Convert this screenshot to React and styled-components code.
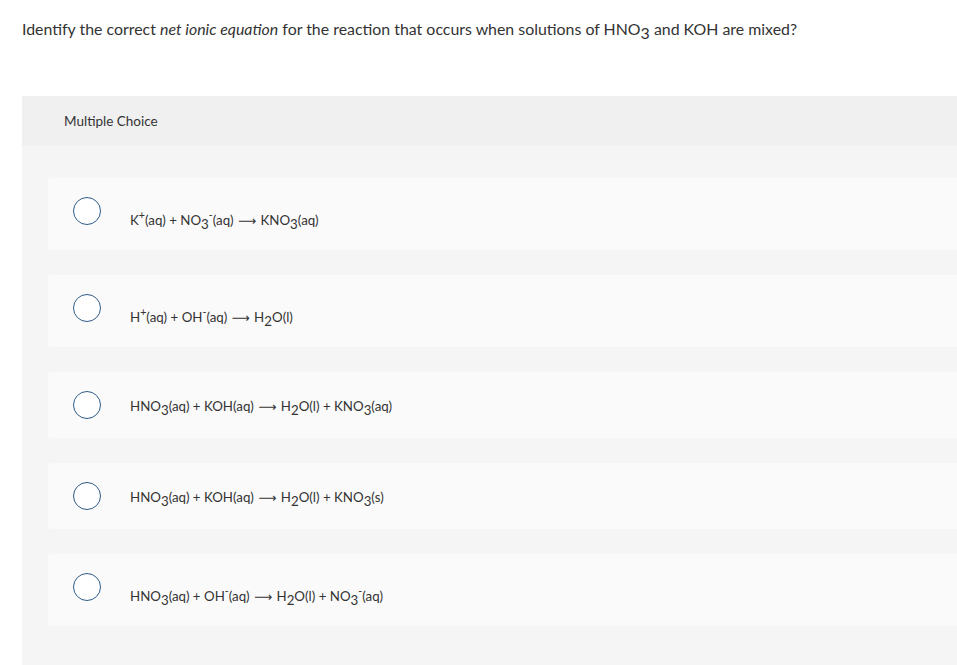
import React from "react";
import styled, { createGlobalStyle } from "styled-components";

const Global = createGlobalStyle`
  html, body { margin: 0; padding: 0; background: #ffffff; }
  body { overflow: hidden; font-family: "Lato", "Open Sans", sans-serif; color: #333333; }
  #root { width: 957px; height: 665px; overflow: hidden; }
`;

const Page = styled.div`
  padding: 17px 0 0 22px;
  height: 665px;
  box-sizing: border-box;
`;

const Prompt = styled.p`
  margin: 0;
  font-size: 15.9px;
  line-height: 24px;
  color: #333333;
  white-space: nowrap;
  em { font-style: italic; }
`;

const Panel = styled.section`
  margin-top: 55px;
  margin-right: -60px;
  background: #f5f5f5;
  height: 600px;
`;

const PanelHeader = styled.div`
  height: 50px;
  background: #f0f0f0;
  display: flex;
  align-items: center;
  padding-left: 42px;
  font-size: 13.5px;
  color: #333333;
`;

const Options = styled.div`
  display: flex;
  flex-direction: column;
  gap: 25px;
  padding: 32px 0 0 26px;
`;

const Card = styled.label`
  display: flex;
  align-items: flex-start;
  gap: 29px;
  background: #fafafa;
  border-radius: 4px 0 0 4px;
  padding: 19px 0 19px 25px;
`;

const Radio = styled.span`
  flex: none;
  width: 28px;
  height: 28px;
  box-sizing: border-box;
  border-radius: 50%;
  border: 1.5px solid #2f5b86;
  background: #ffffff;
`;

const Equation = styled.span`
  margin-top: 4px;
  font-size: 13.3px;
  line-height: 22px;
  color: #333333;
  white-space: nowrap;
`;

const Sub = styled.sub`
  font-size: 1em;
  vertical-align: -4px;
  line-height: 0;
`;

const Sup = styled.sup`
  font-size: 0.8em;
  vertical-align: 6px;
  line-height: 27px;
`;

const Arrow = styled.span`
  display: inline-block;
  margin: 0 1px;
  font-family: "DejaVu Sans", sans-serif;
  font-size: 0.95em;
  line-height: 1;
`;

const options = [
  <>K<Sup>+</Sup>(aq) + NO<Sub>3</Sub><Sup>-</Sup>(aq) <Arrow>⟶</Arrow> KNO<Sub>3</Sub>(aq)</>,
  <>H<Sup>+</Sup>(aq) + OH<Sup>-</Sup>(aq) <Arrow>⟶</Arrow> H<Sub>2</Sub>O(l)</>,
  <>HNO<Sub>3</Sub>(aq) + KOH(aq) <Arrow>⟶</Arrow> H<Sub>2</Sub>O(l) + KNO<Sub>3</Sub>(aq)</>,
  <>HNO<Sub>3</Sub>(aq) + KOH(aq) <Arrow>⟶</Arrow> H<Sub>2</Sub>O(l) + KNO<Sub>3</Sub>(s)</>,
  <>HNO<Sub>3</Sub>(aq) + OH<Sup>-</Sup>(aq) <Arrow>⟶</Arrow> H<Sub>2</Sub>O(l) + NO<Sub>3</Sub><Sup>-</Sup>(aq)</>,
];

export default function App() {
  return (
    <>
      <Global />
      <Page>
        <Prompt>
          Identify the correct <em>net ionic equation</em> for the reaction that occurs when solutions of HNO<Sub>3</Sub> and KOH are mixed?
        </Prompt>
        <Panel>
          <PanelHeader>Multiple Choice</PanelHeader>
          <Options>
            {options.map((o, i) => (
              <Card key={i}>
                <Radio />
                <Equation>{o}</Equation>
              </Card>
            ))}
          </Options>
        </Panel>
      </Page>
    </>
  );
}
